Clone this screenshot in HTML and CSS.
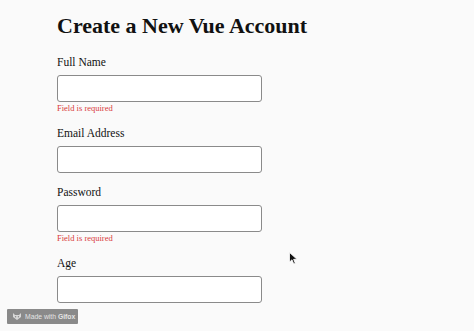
FILE: index.html
```html
<!DOCTYPE html>
<html>
<head>
<meta charset="utf-8">
<link rel="stylesheet" href="styles.css">
</head>
<body>
<div class="page">
  <h1 class="title">Create a New Vue Account</h1>
  <form class="form">
    <div class="field">
      <label class="label">Full Name</label>
      <input class="input" type="text">
      <div class="error">Field is required</div>
    </div>
    <div class="field">
      <label class="label">Email Address</label>
      <input class="input" type="text">
    </div>
    <div class="field">
      <label class="label">Password</label>
      <input class="input" type="password">
      <div class="error">Field is required</div>
    </div>
    <div class="field">
      <label class="label">Age</label>
      <input class="input" type="text">
    </div>
  </form>
</div>
<div class="badge">
  <svg class="badge-icon" width="10" height="9" viewBox="0 0 10 9"><path d="M1 1 L3 3 L7 3 L9 1 L9 5 L5 8 L1 5 Z" fill="#d8d8d8"/><circle cx="3.6" cy="4.8" r="0.7" fill="#8a8a8a"/><circle cx="6.4" cy="4.8" r="0.7" fill="#8a8a8a"/></svg>
  <span class="badge-text">Made with <b>Gifox</b></span>
</div>
<svg class="cursor" width="9" height="13" viewBox="0 0 9 13"><path d="M0.5 0.5 L0.5 10 L3 7.8 L4.8 12 L6.3 11.3 L4.6 7.3 L8 7.3 Z" fill="#111" stroke="#fff" stroke-width="0.8"/></svg>
</body>
</html>
```

FILE: styles.css
```css
html, body {
  margin: 0;
  padding: 0;
}
body {
  background: #fafafa;
  width: 474px;
  height: 331px;
  overflow: hidden;
  font-family: "Liberation Serif", "Times New Roman", serif;
  color: #111;
  position: relative;
}
.page {
  padding: 12px 0 0 57px;
}
.title {
  font-size: 22px;
  font-weight: bold;
  margin: 0 0 15px 0;
  line-height: 28px;
}
.form {
  display: flex;
  flex-direction: column;
}
.field {
  display: flex;
  flex-direction: column;
  margin-bottom: 12px;
}
.label {
  font-size: 11.5px;
  line-height: 15px;
  margin-bottom: 5px;
}
.input {
  box-sizing: border-box;
  width: 205px;
  height: 27px;
  border: 1px solid #8a8a8a;
  border-radius: 3px;
  background: #fff;
  margin: 0;
}
.error {
  color: #d93a3a;
  font-size: 8.5px;
  line-height: 12px;
}
.badge {
  position: absolute;
  left: 7px;
  top: 309px;
  width: 71px;
  height: 15px;
  background: #8a8a8a;
  border-radius: 1px;
  display: flex;
  align-items: center;
  gap: 3px;
  padding-left: 5px;
  box-sizing: border-box;
}
.badge-text {
  font-family: "Liberation Sans", Arial, sans-serif;
  font-size: 6.8px;
  color: #e4e4e4;
  white-space: nowrap;
}
.cursor {
  position: absolute;
  left: 289px;
  top: 252px;
}
```
